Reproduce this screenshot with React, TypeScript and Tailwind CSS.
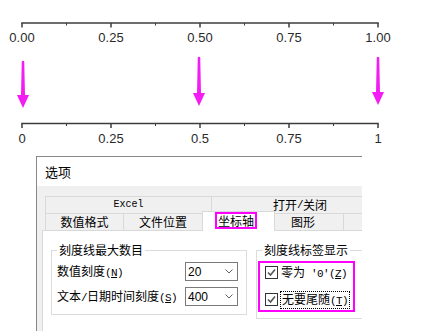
import React from 'react';

const major = [22, 111, 200, 289, 378];
const minor = [66.5, 155.5, 244.5, 333.5];

function Axis({ y, labels }: { y: number; labels: string[] }) {
    return (
        <g>
            <line x1={21.25} x2={378.75} y1={y} y2={y} stroke="#3c3c3c" strokeWidth={1.5} />
            {major.map((x) => (
                <line key={x} x1={x} x2={x} y1={y} y2={y + 4.5} stroke="#3c3c3c" strokeWidth={1.5} />
            ))}
            {minor.map((x) => (
                <line key={x} x1={x} x2={x} y1={y} y2={y + 2.5} stroke="#3c3c3c" strokeWidth={1} />
            ))}
            {labels.map((t, i) => (
                <text
                    key={i}
                    x={major[i]}
                    y={y + 19}
                    textAnchor="middle"
                    fontFamily="'Liberation Sans', Arial, sans-serif"
                    fontSize={13}
                    fill="#2a2a2a"
                >
                    {t}
                </text>
            ))}
        </g>
    );
}

function Arrow({ cx, top, tip }: { cx: number; top: number; tip: number }) {
    const h = tip - 13;
    const d = `M${cx - 1.2} ${top} L${cx + 1.2} ${top} L${cx + 2} ${h} L${cx + 6} ${h} L${cx} ${tip} L${cx - 6} ${h} L${cx - 2} ${h} Z`;
    return <path d={d} fill="#f31cf3" />;
}

// half-width ascii, like the dialog's bitmap font
function A({ children }: { children: React.ReactNode }) {
    return <span className="font-['Liberation_Mono',monospace] text-[11px] tracking-[-0.6px]">{children}</span>;
}

function Select({ value }: { value: string }) {
    return (
        <div className="w-[53px] h-[19px] border border-[#7a7a7a] bg-white flex items-center justify-between pl-[2px] pr-[4px] text-[12px] leading-none font-['Liberation_Sans',sans-serif]">
            <span>{value}</span>
            <svg width="8" height="5" viewBox="0 0 8 5">
                <polyline points="0.5,0.5 4,4 7.5,0.5" fill="none" stroke="#606060" strokeWidth="1" />
            </svg>
        </div>
    );
}

function Check() {
    return (
        <svg width="13" height="13" viewBox="0 0 13 13" className="shrink-0">
            <rect x="0.5" y="0.5" width="12" height="12" fill="#fff" stroke="#333" />
            <polyline points="3,6.5 5.5,9 10,3.5" fill="none" stroke="#555" strokeWidth="1.6" />
        </svg>
    );
}

export default function App() {
    return (
        <div className="w-[422px] h-[331px] bg-white overflow-hidden font-['Noto_Sans_CJK_SC',sans-serif] text-black">
            <svg width="422" height="156" className="block">
                <Axis y={23} labels={['0.00', '0.25', '0.50', '0.75', '1.00']} />
                <Arrow cx={23} top={61} tip={108} />
                <Arrow cx={199} top={57} tip={106} />
                <Arrow cx={378} top={57} tip={105} />
                <Axis y={123.5} labels={['0', '0.25', '0.5', '0.75', '1']} />
            </svg>

            <div className="ml-[36px] w-[326px] h-[175px] border-l border-t border-[#888] flex flex-col overflow-hidden">
                <div className="h-[29px] shrink-0 flex items-center pl-[8px] text-[13px] leading-none bg-white">选项</div>

                <div className="flex-1 bg-[#f0f0f0] pt-[10px] pl-[5px] flex flex-col">
                    {/* tab strip */}
                    <div className="ml-[3px] flex h-[17px] text-[12px] leading-none">
                        <div className="w-[166px] shrink-0 border-l border-t border-[#d9d9d9] flex items-center justify-center text-[10px] font-['Liberation_Mono',monospace]">
                            Excel
                        </div>
                        <div className="w-[178px] shrink-0 border-l border-t border-r border-[#d9d9d9] flex items-center justify-center">
                            打开<A>/</A>关闭
                        </div>
                    </div>
                    <div className="ml-[3px] flex items-end h-[17px] text-[12px] leading-none">
                        <div className="w-[78px] h-[17px] shrink-0 border-l border-t border-[#d9d9d9] flex items-center justify-center">数值格式</div>
                        <div className="w-[79px] h-[17px] shrink-0 border-l border-t border-[#d9d9d9] flex items-center justify-center">文件位置</div>
                        <div className="relative z-10 w-[73px] h-[20px] -mb-[1px] shrink-0 bg-white border-l border-t border-r border-[#d9d9d9] flex items-start pl-[12px]">
                            <div className="w-[42px] h-[17px] border-2 border-[#ff00ff] flex items-center justify-center">坐标轴</div>
                        </div>
                        <div className="w-[69px] h-[17px] shrink-0 border-t border-r border-[#d9d9d9] flex items-center pl-[16px]">图形</div>
                        <div className="w-[40px] h-[17px] shrink-0 border-t border-r border-[#d9d9d9]" />
                    </div>

                    {/* panel */}
                    <div className="flex-1 bg-white border-l border-t border-[#d9d9d9] pt-[12px] pl-[8px] flex gap-[9px] text-[12px]">
                        <fieldset className="w-[196px] h-[72px] shrink-0 border border-[#dcdcdc] pl-[5px]">
                            <legend className="px-[2px] leading-[14px] text-[12px]">刻度线最大数目</legend>
                            <div className="flex flex-col gap-[6px] pt-[5px]">
                                <div className="flex items-center h-[19px]">
                                    <span className="w-[128px] shrink-0 leading-none">
                                        数值刻度<A>(<span className="underline">N</span>)</A>
                                    </span>
                                    <Select value="20" />
                                </div>
                                <div className="flex items-center h-[19px]">
                                    <span className="w-[128px] shrink-0 leading-none">
                                        文本<A>/</A>日期时间刻度<A>(<span className="underline">S</span>)</A>
                                    </span>
                                    <Select value="400" />
                                </div>
                            </div>
                        </fieldset>

                        <fieldset className="w-[140px] h-[76px] shrink-0 border border-[#dcdcdc]">
                            <legend className="ml-[5px] px-[2px] leading-[14px] text-[12px]">刻度线标签显示</legend>
                            <div className="ml-[1px] mt-[4px] w-[97px] h-[51px] border-2 border-[#ff00ff] flex flex-col gap-[14px] pt-[3px] pl-[5px]">
                                <div className="flex items-center gap-[3px] h-[13px] leading-none">
                                    <Check />
                                    <span>
                                        零为<A> '0'(<span className="underline">Z</span>)</A>
                                    </span>
                                </div>
                                <div className="flex items-center gap-[2px] h-[13px] leading-none">
                                    <Check />
                                    <span className="border border-dotted border-black px-[1px] py-[1px]">
                                        无要尾随<A>(<span className="underline">T</span>)</A>
                                    </span>
                                </div>
                            </div>
                        </fieldset>
                    </div>
                </div>
            </div>
        </div>
    );
}
